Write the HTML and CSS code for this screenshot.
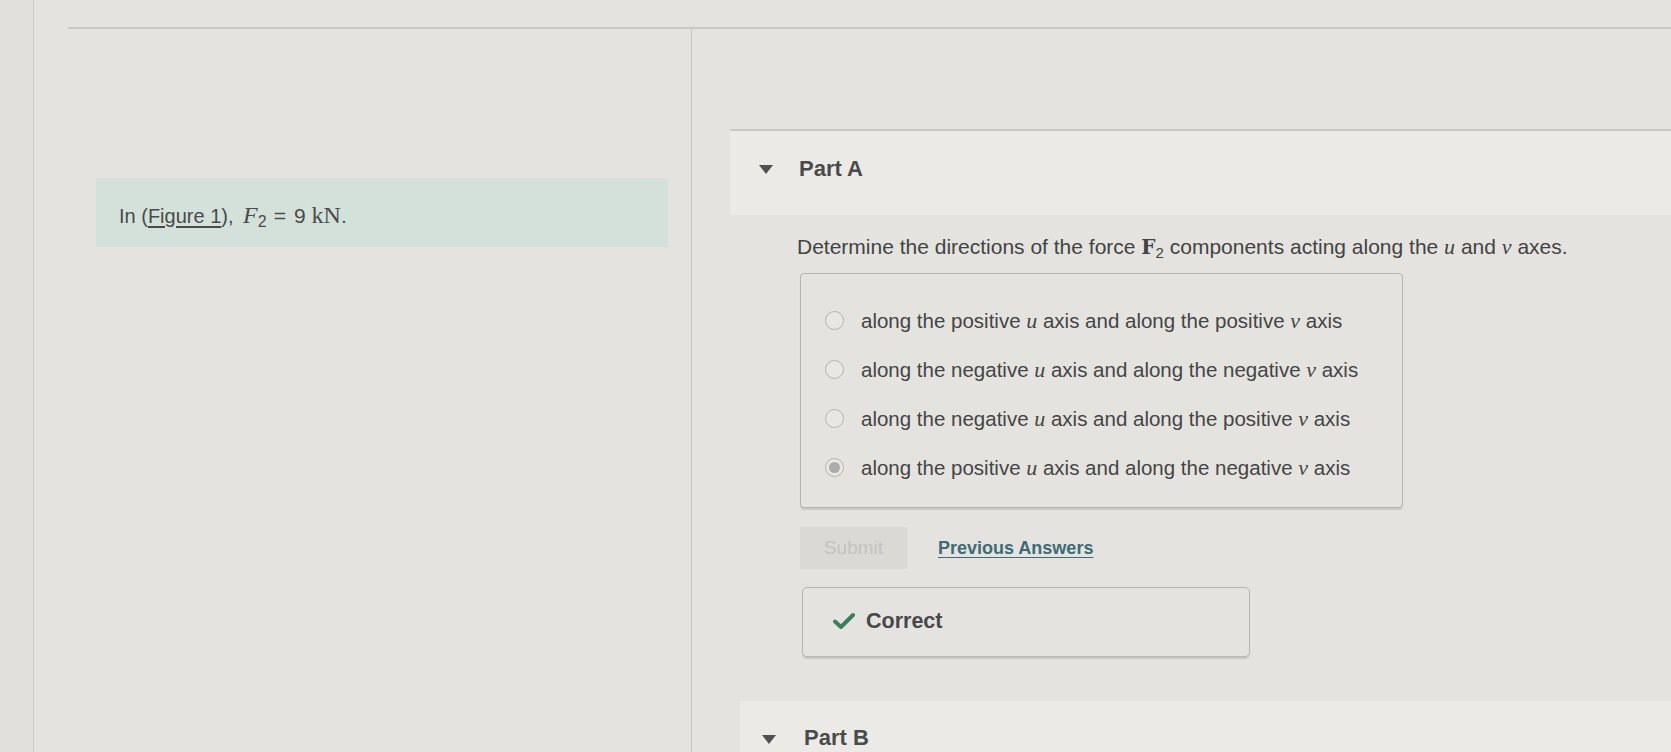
FILE: index.html
```html
<!DOCTYPE html>
<html>
<head>
<meta charset="utf-8">
<link rel="stylesheet" href="styles.css">
</head>
<body>
<div class="page">
  <div class="gutter"></div>
  <div class="main">
    <div class="cols">
      <div class="left">
        <div class="intro"><span>In (<a class="fig" href="#">Figure 1</a>), <span class="math"><span class="mi">F</span><sub class="sub">2</sub><span class="eq">=</span>9<span class="mr unit">kN</span>.</span></span></div>
      </div>
      <div class="right">
        <section class="part">
          <div class="part-head">
            <span class="tri"></span><span class="part-title">Part A</span>
          </div>
          <div class="part-body">
            <p class="question">Determine the directions of the force <span class="mb">F</span><sub class="sub">2</sub> components acting along the <span class="mi">u</span> and <span class="mi">v</span> axes.</p>
            <div class="options">
              <label class="opt"><span class="radio"></span><span>along the positive <span class="mi">u</span> axis and along the positive <span class="mi">v</span> axis</span></label>
              <label class="opt"><span class="radio"></span><span>along the negative <span class="mi">u</span> axis and along the negative <span class="mi">v</span> axis</span></label>
              <label class="opt"><span class="radio"></span><span>along the negative <span class="mi">u</span> axis and along the positive <span class="mi">v</span> axis</span></label>
              <label class="opt"><span class="radio checked"></span><span>along the positive <span class="mi">u</span> axis and along the negative <span class="mi">v</span> axis</span></label>
            </div>
            <div class="actions">
              <span class="submit">Submit</span>
              <a class="prev" href="#">Previous Answers</a>
            </div>
            <div class="correct">
              <svg class="check" width="22" height="18" viewBox="0 0 22 18"><path d="M2 9.5 L8 15 L20 3" fill="none" stroke="#3d7f5d" stroke-width="4" stroke-linecap="round" stroke-linejoin="round"/></svg>
              <span class="correct-text">Correct</span>
            </div>
          </div>
        </section>
        <section class="part part-b">
          <div class="part-head head-b">
            <span class="tri"></span><span class="part-title">Part B</span>
          </div>
        </section>
      </div>
    </div>
  </div>
</div>
</body>
</html>
```
FILE: styles.css
```css
* { box-sizing: border-box; }
html, body { margin: 0; padding: 0; }
body {
  width: 1671px;
  height: 752px;
  overflow: hidden;
  background: #e4e3df;
  font-family: "Liberation Sans", Arial, sans-serif;
  color: #434343;
}
.page {
  display: flex;
  height: 752px;
}
.gutter {
  width: 34px;
  border-right: 1px solid #cfceca;
  background: #e1e0dc;
}
.main {
  flex: 1;
  padding-top: 27px;
}
.cols {
  display: grid;
  grid-template-columns: 623px 1fr;
  height: 725px;
  border-top: 2px solid #c9c8c4;
  margin-left: 34px;
}
.left {
  padding-top: 149px;
}
.intro {
  margin-left: 28px;
  width: 572px;
  height: 69px;
  background: #d4e1da;
  display: flex;
  align-items: center;
  padding-left: 23px;
  padding-top: 6px;
  font-size: 20px;
  color: #4a4a4a;
}
.fig { color: #4a4a4a; text-decoration: underline; text-underline-offset: 3px; }
.mi { font-family: "Liberation Serif", "DejaVu Serif", serif; font-style: italic; font-size: 22px; }
.mr { font-family: "Liberation Serif", "DejaVu Serif", serif; font-size: 22px; }
.mb { font-family: "DejaVu Serif", "Liberation Serif", serif; font-weight: bold; font-size: 20px; }
.sub { font-size: 15px; vertical-align: -4px; line-height: 0; }
.math { margin-left: 4px; font-size: 21px; }
.math .mi { font-size: 24px; }
.math .sub { font-size: 16px; }
.eq { margin: 0 8px 0 7px; }
.unit { font-size: 24px; margin-left: 6px; }
.right {
  border-left: 1px solid #c6c5c1;
  padding-top: 100px;
  display: flex;
  flex-direction: column;
}
.part {
  margin-left: 38px;
}
.part-head {
  border-top: 2px solid #c9c8c4;
  background: #ebeae7;
  height: 86px;
  display: flex;
  align-items: center;
  padding-left: 29px;
  padding-bottom: 8px;
}
.tri {
  width: 0; height: 0;
  border-left: 7px solid transparent;
  border-right: 7px solid transparent;
  border-top: 9px solid #505050;
  margin-right: 26px;
}
.part-title {
  font-weight: bold;
  font-size: 22px;
  color: #4a4a4a;
}
.part-body {
  padding-left: 67px;
}
.question {
  margin: 20px 0 0 0;
  font-size: 21px;
  line-height: 24px;
}
.options {
  margin-top: 14px;
  margin-left: 3px;
  width: 603px;
  height: 235px;
  border: 1px solid #b3b2ae;
  border-radius: 4px;
  box-shadow: 0 2px 1px rgba(0,0,0,0.12);
  padding: 22px 0 0 24px;
  display: flex;
  flex-direction: column;
}
.opt {
  display: flex;
  align-items: center;
  height: 49px;
  font-size: 20.5px;
  color: #454545;
}
.radio {
  width: 19px; height: 19px;
  border-radius: 50%;
  border: 1.5px solid #b3b3af;
  background: #e8e7e4;
  margin-right: 17px;
  flex: none;
  display: flex;
  align-items: center;
  justify-content: center;
}
.radio.checked::after {
  content: "";
  width: 11px; height: 11px;
  border-radius: 50%;
  background: #acacaa;
}
.actions {
  margin-top: 19px;
  margin-left: 3px;
  display: flex;
  align-items: center;
}
.submit {
  width: 107px;
  height: 42px;
  background: #dad9d5;
  color: #c4c3c0;
  font-size: 19px;
  display: flex;
  align-items: center;
  justify-content: center;
}
.prev {
  margin-left: 31px;
  font-weight: bold;
  font-size: 18px;
  color: #3e6b76;
  text-decoration: underline;
  text-underline-offset: 3px;
}
.correct {
  margin-top: 18px;
  margin-left: 5px;
  width: 448px;
  height: 70px;
  border: 1px solid #b7b6b2;
  border-radius: 5px;
  box-shadow: 0 2px 1px rgba(0,0,0,0.12);
  display: flex;
  align-items: center;
  padding-left: 30px;
  padding-bottom: 2px;
}
.check { margin-right: 11px; }
.correct-text {
  font-weight: bold;
  font-size: 21.5px;
  color: #484848;
}
.part-b {
  margin-top: 44px;
  margin-left: 48px;
}
.head-b {
  border-top: none;
  height: 60px;
  padding-left: 22px;
  padding-bottom: 10px;
  align-items: flex-end;
}
.head-b .tri { margin-right: 28px; margin-bottom: 7px; }
```
